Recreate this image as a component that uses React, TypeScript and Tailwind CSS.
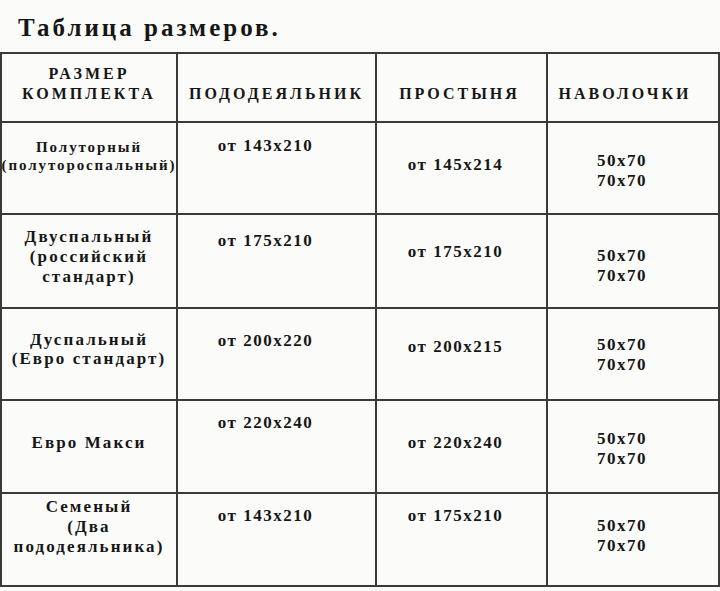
import React from "react";

type Cell = { lines: string[]; pt: string; lh?: string; size?: string; pr?: string };

const serif = { fontFamily: '"Liberation Serif", "Times New Roman", serif' };

const header: Cell[] = [
  { lines: ["РАЗМЕР", "КОМПЛЕКТА"], pt: "pt-[10px]" },
  { lines: ["ПОДОДЕЯЛЬНИК"], pt: "pt-[30px]" },
  { lines: ["ПРОСТЫНЯ"], pt: "pt-[30px]", pr: "pr-[4px]" },
  { lines: ["НАВОЛОЧКИ"], pt: "pt-[30px]", pr: "pr-[16px]" },
];

const side = "text-[17px] tracking-[2.1px]";
const value = "text-[17px] tracking-[1.5px]";
// value columns sit a little left of centre in the picture
const c2 = "pr-[22px]";
const c3 = "pr-[12px]";
const c4 = "pr-[22px]";

const rows: { h: string; cells: Cell[] }[] = [
  {
    h: "h-[92px]",
    cells: [
      { lines: ["Полуторный", "(полутороспальный)"], pt: "pt-[15px]", lh: "leading-[18px]", size: "text-[15px] tracking-[1.9px]" },
      { lines: ["от 143x210"], pt: "pt-[13px]", pr: c2 },
      { lines: ["от 145x214"], pt: "pt-[32px]", pr: c3 },
      { lines: ["50x70", "70x70"], pt: "pt-[28px]", pr: c4 },
    ],
  },
  {
    h: "h-[94px]",
    cells: [
      { lines: ["Двуспальный", "(российский", "стандарт)"], pt: "pt-[12px]", size: side },
      { lines: ["от 175x210"], pt: "pt-[16px]", pr: c2 },
      { lines: ["от 175x210"], pt: "pt-[27px]", pr: c3 },
      { lines: ["50x70", "70x70"], pt: "pt-[31px]", pr: c4 },
    ],
  },
  {
    h: "h-[92px]",
    cells: [
      { lines: ["Дуспальный", "(Евро стандарт)"], pt: "pt-[21px]", lh: "leading-[19px]", size: side },
      { lines: ["от 200x220"], pt: "pt-[22px]", pr: c2 },
      { lines: ["от 200x215"], pt: "pt-[28px]", pr: c3 },
      { lines: ["50x70", "70x70"], pt: "pt-[26px]", pr: c4 },
    ],
  },
  {
    h: "h-[93px]",
    cells: [
      { lines: ["Евро Макси"], pt: "pt-[32px]", size: side },
      { lines: ["от 220x240"], pt: "pt-[12px]", pr: c2 },
      { lines: ["от 220x240"], pt: "pt-[32px]", pr: c3 },
      { lines: ["50x70", "70x70"], pt: "pt-[28px]", pr: c4 },
    ],
  },
  {
    h: "h-[93px]",
    cells: [
      { lines: ["Семеный", "(Два", "пододеяльника)"], pt: "pt-[3px]", size: side },
      { lines: ["от 143x210"], pt: "pt-[12px]", pr: c2 },
      { lines: ["от 175x210"], pt: "pt-[12px]", pr: c3 },
      { lines: ["50x70", "70x70"], pt: "pt-[22px]", pr: c4 },
    ],
  },
];

function TableCell({ cell, head }: { cell: Cell; head?: boolean }) {
  return (
    <div
      className={`flex flex-col items-center border-r-2 border-b-2 border-[#3a3a3a] text-center whitespace-nowrap ${cell.pt} ${
        cell.pr ?? ""
      } ${cell.lh ?? "leading-[20px]"} ${head ? "text-[16px] tracking-[3px]" : cell.size ?? value}`}
    >
      {cell.lines.map((l, i) => (
        <span key={i}>{l}</span>
      ))}
    </div>
  );
}

export default function App() {
  return (
    <div className="w-[720px] h-[591px] bg-[#fbfbf9] text-[#161616] font-bold overflow-hidden" style={serif}>
      <h1 className="h-[52px] pl-[18px] pt-[14px] text-[25px] leading-[28px] tracking-[3px]">Таблица размеров.</h1>

      <div className="border-l-2 border-t-2 border-[#3a3a3a]">
        <div className="grid grid-cols-[176px_199px_171px_172px] h-[69px]">
          {header.map((c, i) => (
            <TableCell key={i} cell={c} head />
          ))}
        </div>
        {rows.map((r, i) => (
          <div key={i} className={`grid grid-cols-[176px_199px_171px_172px] ${r.h}`}>
            {r.cells.map((c, j) => (
              <TableCell key={j} cell={c} />
            ))}
          </div>
        ))}
      </div>
    </div>
  );
}
